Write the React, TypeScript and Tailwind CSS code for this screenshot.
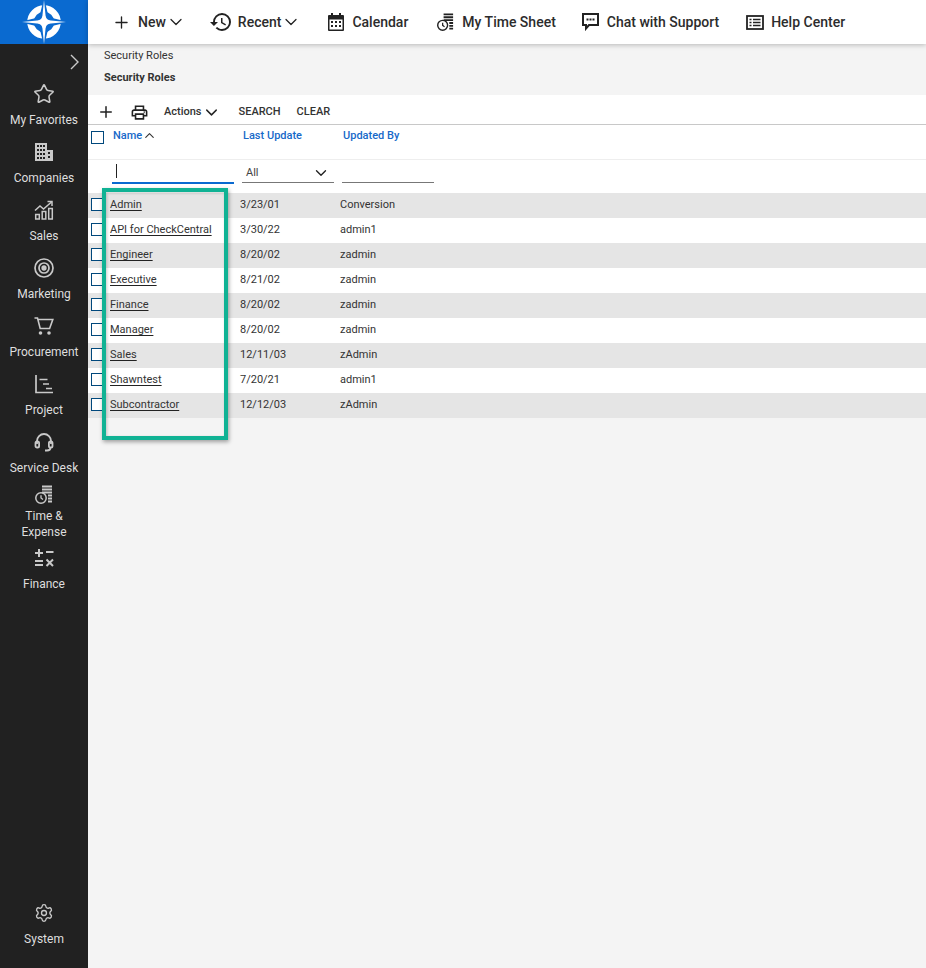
import { ReactNode } from 'react';
import { ChevronDown, ChevronUp, Plus, Settings, Star } from 'lucide-react';
import { MdHistory, MdOutlinePrint } from 'react-icons/md';

const font = 'font-["Roboto",sans-serif]';

function Logo() {
  return (
    <svg viewBox="0 0 44 44" className="h-[44px] w-[44px]">
      <circle cx="22" cy="22" r="13.5" fill="none" stroke="#fff" strokeWidth="6.5" />
      <path d="M22 4 L25.5 18.5 L40 22 L25.5 25.5 L22 40 L18.5 25.5 L4 22 L18.5 18.5 Z" fill="#0a6ad0" stroke="#0a6ad0" strokeWidth="3" />
      <path d="M22 0 L24 20 L44 22 L24 24 L22 44 L20 24 L0 22 L20 20 Z" fill="#fff" />
      <path d="M22 14 L25 19 L30 22 L25 25 L22 30 L19 25 L14 22 L19 19 Z" fill="#fff" />
    </svg>
  );
}

function TimeSheetIcon({ className }: { className?: string }) {
  return (
    <svg viewBox="0 0 20 20" className={className} fill="none" stroke="currentColor">
      <path d="M8 1.5h10M8 4.5h10M8 7.5h10M14 10.5h4M14 13.5h4M14 16.5h4" strokeWidth="1.9" />
      <circle cx="7" cy="13" r="5.2" strokeWidth="1.5" />
      <path d="M7 10.2V13l2 1.6" strokeWidth="1.3" />
    </svg>
  );
}

function BuildingIcon() {
  return (
    <svg viewBox="0 0 18 18" className="h-[18px] w-[18px]">
      <path
        fillRule="evenodd"
        fill="currentColor"
        d="M0 0h12v7h6v11H0Z M2 2v2h2V2Z M5 2v2h2V2Z M8 2v2h2V2Z M2 6v2h2V6Z M5 6v2h2V6Z M8 6v2h2V6Z M2 10v2h2v-2Z M5 10v2h2v-2Z M8 10v2h2v-2Z M2 14v2h2v-2Z M5 14v2h2v-2Z M8 14v2h2v-2Z M13 9v2h2V9Z M13 13v2h2v-2Z"
      />
    </svg>
  );
}

function SalesIcon() {
  return (
    <svg viewBox="0 0 20 20" className="h-[20px] w-[20px]" fill="none" stroke="currentColor" strokeWidth="1.5">
      <path d="M1 10.5 L6 6 L9.5 9 L17.5 2" />
      <path d="M13.5 1.5h4.5v4.5" />
      <rect x="1.7" y="14.5" width="3.6" height="4.5" />
      <rect x="8.2" y="11.5" width="3.6" height="7.5" />
      <rect x="14.7" y="8.5" width="3.6" height="10.5" />
    </svg>
  );
}

function TargetIcon() {
  return (
    <svg viewBox="0 0 20 20" className="h-[20px] w-[20px]" fill="none" stroke="currentColor" strokeWidth="1.7">
      <circle cx="10" cy="10" r="9" />
      <circle cx="10" cy="10" r="5" />
      <circle cx="10" cy="10" r="1.8" fill="currentColor" />
    </svg>
  );
}

function CartIcon() {
  return (
    <svg viewBox="0 0 20 20" className="h-[20px] w-[20px]" fill="none" stroke="currentColor" strokeWidth="1.6">
      <path d="M0.5 2h3l2.7 10.5h9.4L18.8 3.5H4" />
      <circle cx="6.5" cy="17" r="1.8" fill="currentColor" stroke="none" />
      <circle cx="15" cy="17" r="1.8" fill="currentColor" stroke="none" />
    </svg>
  );
}

function GanttIcon() {
  return (
    <svg viewBox="0 0 20 20" className="h-[20px] w-[20px]" fill="none" stroke="currentColor" strokeWidth="1.7">
      <path d="M2 1v17.5h17" />
      <path d="M5.5 5.5h8M9 10h6M12 14.5h6" />
    </svg>
  );
}

function HeadsetIcon() {
  return (
    <svg viewBox="0 0 20 20" className="h-[20px] w-[20px]" fill="none" stroke="currentColor" strokeWidth="1.8">
      <path d="M3 12V9a7 7 0 0 1 14 0v3" />
      <rect x="1.5" y="9.5" width="3.6" height="6" rx="1.6" />
      <rect x="14.9" y="9.5" width="3.6" height="6" rx="1.6" />
      <path d="M16.5 15.5c0 2-1.5 3-3.5 3h-2" />
    </svg>
  );
}

function FinanceIcon() {
  return (
    <svg viewBox="0 0 20 20" className="h-[20px] w-[20px]" fill="none" stroke="currentColor" strokeWidth="2">
      <path d="M1 5h8M5 1v8M12 4h7.5M1 13h8M1 17h8M12.5 11.5l6.5 6.5M19 11.5l-6.5 6.5" />
    </svg>
  );
}

function CalendarIcon() {
  return (
    <svg viewBox="0 0 16 18" className="h-[18px] w-[16px] shrink-0">
      <path
        fillRule="evenodd"
        fill="currentColor"
        d="M3 0h2v2h6V0h2v2h2a1 1 0 0 1 1 1v14a1 1 0 0 1-1 1H1a1 1 0 0 1-1-1V3a1 1 0 0 1 1-1h2Z M1.5 6.5V16.5h13V6.5Z"
      />
      <path fill="currentColor" d="M3 8h2v2H3Zm4 0h2v2H7Zm4 0h2v2h-2ZM3 12h2v2H3Zm4 0h2v2H7Zm4 0h2v2h-2Z" />
    </svg>
  );
}

function ChatIcon() {
  return (
    <svg viewBox="0 0 17 18" className="h-[18px] w-[17px] shrink-0" fill="none" stroke="currentColor" strokeWidth="2">
      <path d="M1 1h15v11H7l-3 3.5V12H1Z" />
      <path d="M4.5 6.5h2M7.5 6.5h2M10.5 6.5h2" strokeWidth="1.8" />
    </svg>
  );
}

function HelpIcon() {
  return (
    <svg viewBox="0 0 18 15" className="h-[15px] w-[18px] shrink-0" fill="none" stroke="currentColor" strokeWidth="1.8">
      <rect x="1" y="1" width="16" height="13" />
      <path d="M3.5 4.5h2M3.5 7.5h2M3.5 10.5h2M7 4.5h7.5M7 7.5h7.5M7 10.5h7.5" strokeWidth="1.6" />
    </svg>
  );
}

function SideItem({ icon, label, className, labelClass }: { icon: ReactNode; label: ReactNode; className?: string; labelClass?: string }) {
  return (
    <div className={`flex flex-col items-center text-center ${className ?? 'h-[58px]'}`}>
      <div className="flex h-[20px] items-center justify-center text-[#c9c9c9]">{icon}</div>
      <div className={`${labelClass ?? 'mt-[8px]'} text-[12px] leading-[16px] text-[#dedede]`}>{label}</div>
    </div>
  );
}

function NavItem({ icon, label, chevron, className }: { icon: ReactNode; label: string; chevron?: boolean; className?: string }) {
  return (
    <div className={`flex items-center ${className ?? ''}`}>
      <span className="mr-[7px] flex h-[20px] w-[19px] items-center justify-center text-[#222]">{icon}</span>
      <span className="text-[14px] font-medium leading-[20px] text-[#2c2c2c]">{label}</span>
      {chevron && <ChevronDown size={20} strokeWidth={1.5} className="text-[#222]" />}
    </div>
  );
}

function Check() {
  return <span className="block h-[13px] w-[13px] border border-[#00487c] bg-white" />;
}

const roles = [
  ['Admin', '3/23/01', 'Conversion'],
  ['API for CheckCentral', '3/30/22', 'admin1'],
  ['Engineer', '8/20/02', 'zadmin'],
  ['Executive', '8/21/02', 'zadmin'],
  ['Finance', '8/20/02', 'zadmin'],
  ['Manager', '8/20/02', 'zadmin'],
  ['Sales', '12/11/03', 'zAdmin'],
  ['Shawntest', '7/20/21', 'admin1'],
  ['Subcontractor', '12/12/03', 'zAdmin'],
];

export default function App() {
  return (
    <div className={`relative flex h-[968px] w-[926px] overflow-hidden bg-[#f4f4f4] ${font}`}>
      <aside className="flex h-full w-[88px] shrink-0 flex-col bg-[#212121]">
        <div className="flex h-[44px] items-center justify-center bg-[#0a6ad0]">
          <Logo />
        </div>
        <div className="flex h-[40px] items-start justify-end pt-[10px] pr-[9px]">
          <svg viewBox="0 0 9 16" className="h-[16px] w-[9px]" fill="none" stroke="#c9c9c9" strokeWidth="1.4">
            <path d="M1 1l7 7-7 7" />
          </svg>
        </div>
        <SideItem icon={<Star size={22} strokeWidth={1.7} />} label="My Favorites" />
        <SideItem icon={<BuildingIcon />} label="Companies" />
        <SideItem icon={<SalesIcon />} label="Sales" />
        <SideItem icon={<TargetIcon />} label="Marketing" />
        <SideItem icon={<CartIcon />} label="Procurement" />
        <SideItem icon={<GanttIcon />} label="Project" />
        <SideItem icon={<HeadsetIcon />} label="Service Desk" />
        <SideItem
          className="h-[63px] -mt-[5px]"
          labelClass="mt-[3px]"
          icon={<TimeSheetIcon className="h-[20px] w-[20px]" />}
          label={<>Time &<br />Expense</>}
        />
        <SideItem icon={<FinanceIcon />} label="Finance" />
        <SideItem className="mt-auto h-[65px]" icon={<Settings size={20} strokeWidth={1.6} />} label="System" />
      </aside>

      <main className="flex min-w-0 flex-1 flex-col">
        <header className="relative z-10 flex h-[44px] items-center gap-[27px] bg-white pl-[24px] shadow-[0_1px_5px_rgba(0,0,0,0.25)]">
          <NavItem icon={<Plus size={21} strokeWidth={1.7} />} label="New" chevron />
          <NavItem icon={<MdHistory size={24} className="shrink-0" />} label="Recent" chevron className="-ml-[1px]" />
          <NavItem icon={<CalendarIcon />} label="Calendar" className="-ml-[2px]" />
          <NavItem icon={<TimeSheetIcon className="h-[19px] w-[19px] shrink-0" />} label="My Time Sheet" className="ml-[1px]" />
          <NavItem icon={<ChatIcon />} label="Chat with Support" className="-ml-[2px]" />
          <NavItem icon={<HelpIcon />} label="Help Center" className="-ml-[1px]" />
        </header>

        <div className="h-[51px] pl-[16px] text-[11px] text-[#333]">
          <div className="pt-[5px] leading-[13px]">Security Roles</div>
          <div className="mt-[9px] font-bold leading-[13px]">Security Roles</div>
        </div>

        <div className="flex h-[30px] items-center border-b border-[#c8c8c8] bg-white pt-[5px] pl-[9px] text-[11px] font-medium text-[#333]">
          <Plus size={18} strokeWidth={2} className="text-[#222]" />
          <MdOutlinePrint size={19} className="ml-[15px] text-[#222]" />
          <span className="ml-[15px]">Actions</span>
          <ChevronDown size={19} strokeWidth={1.8} className="text-[#222]" />
          <span className="ml-[18px]">SEARCH</span>
          <span className="ml-[16px]">CLEAR</span>
        </div>

        <div className="flex h-[35px] items-start border-b border-[#eeeeee] bg-white text-[11px] font-medium leading-[13px] text-[#1769c9]">
          <div className="mt-[6px] ml-[3px] w-[22px]"><Check /></div>
          <div className="mt-[4px] flex h-[13px] w-[130px] items-center">
            Name
            <ChevronUp size={15} strokeWidth={1.8} className="text-[#333]" />
          </div>
          <div className="mt-[4px] w-[100px]">Last Update</div>
          <div className="mt-[4px]">Updated By</div>
        </div>

        <div className="flex h-[33px] items-start bg-white text-[11px] text-[#444]">
          <div className="ml-[24px] flex h-[24px] w-[122px] items-center border-b-2 border-[#0a6ad0] pl-[4px]">
            <span className="h-[14px] w-px bg-[#222]" />
          </div>
          <div className="ml-[8px] flex h-[23px] w-[92px] items-center justify-between border-b border-[#777] pt-[4px] pr-[4px] pl-[4px]">
            All
            <ChevronDown size={18} strokeWidth={1.8} className="text-[#222]" />
          </div>
          <div className="ml-[8px] h-[23px] w-[92px] border-b border-[#777]" />
        </div>

        <div className="text-[11px] text-[#333]">
          {roles.map(([name, date, by], i) => (
            <div key={name} className={`flex h-[25px] items-center ${i % 2 === 0 ? 'bg-[#e5e5e5]' : 'bg-white'}`}>
              <div className="ml-[3px] -mt-[2px] w-[19px]"><Check /></div>
              <div className="w-[130px] underline decoration-[#222] underline-offset-2">{name}</div>
              <div className="w-[100px]">{date}</div>
              <div>{by}</div>
            </div>
          ))}
        </div>
      </main>

      <div className="absolute top-[188px] left-[102px] h-[252px] w-[126px] border-[4px] border-[#10b294] shadow-[1px_2px_4px_rgba(0,0,0,0.35),inset_1px_1px_3px_rgba(0,0,0,0.2)]" />
    </div>
  );
}
